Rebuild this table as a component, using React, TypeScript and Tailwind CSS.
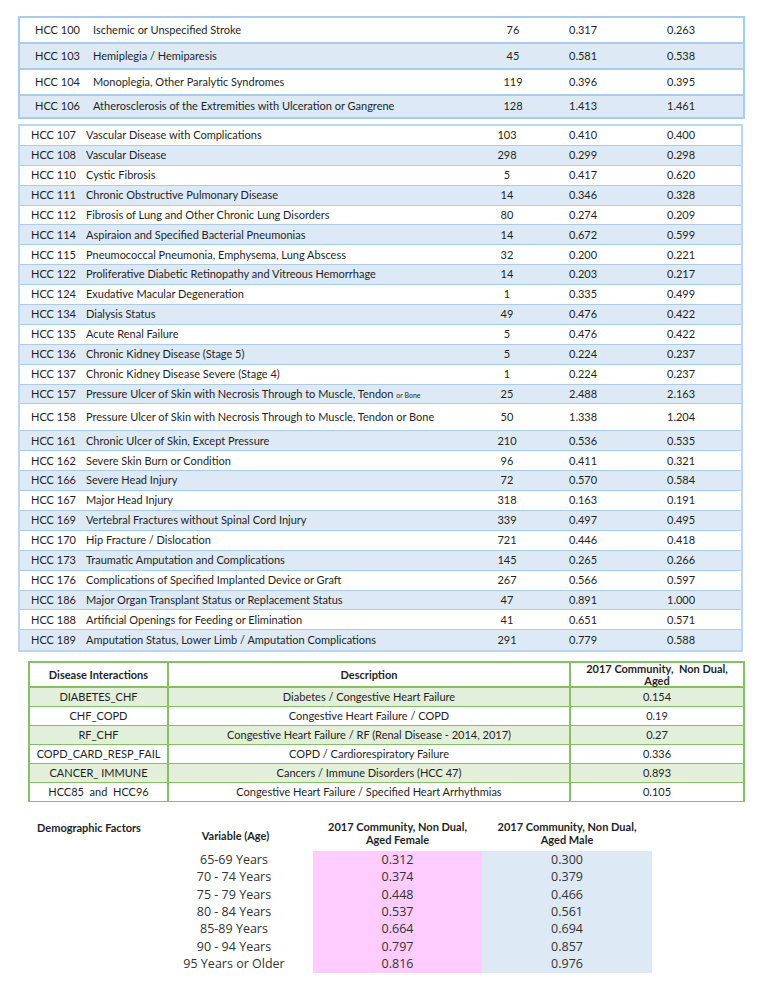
import React from 'react';

const font = { fontFamily: 'Lato, "Liberation Sans", sans-serif' };
const ageFont = { fontFamily: '"Open Sans", "Noto Sans", sans-serif' };

const topRows = [
  ['HCC 100', 'Ischemic or Unspecified Stroke', '76', '0.317', '0.263'],
  ['HCC 103', 'Hemiplegia  / Hemiparesis', '45', '0.581', '0.538'],
  ['HCC 104', 'Monoplegia, Other Paralytic Syndromes', '119', '0.396', '0.395'],
  ['HCC 106', 'Atherosclerosis of the Extremities with Ulceration or Gangrene', '128', '1.413', '1.461'],
];

const mainRows = [
  ['HCC 107', 'Vascular Disease with Complications', '103', '0.410', '0.400'],
  ['HCC 108', 'Vascular Disease', '298', '0.299', '0.298'],
  ['HCC 110', 'Cystic Fibrosis', '5', '0.417', '0.620'],
  ['HCC 111', 'Chronic Obstructive Pulmonary Disease', '14', '0.346', '0.328'],
  ['HCC 112', 'Fibrosis of Lung and Other Chronic Lung Disorders', '80', '0.274', '0.209'],
  ['HCC 114', 'Aspiraion and Specified Bacterial Pneumonias', '14', '0.672', '0.599'],
  ['HCC 115', 'Pneumococcal Pneumonia, Emphysema, Lung Abscess', '32', '0.200', '0.221'],
  ['HCC 122', 'Proliferative Diabetic Retinopathy and Vitreous Hemorrhage', '14', '0.203', '0.217'],
  ['HCC 124', 'Exudative Macular Degeneration', '1', '0.335', '0.499'],
  ['HCC 134', 'Dialysis Status', '49', '0.476', '0.422'],
  ['HCC 135', 'Acute Renal Failure', '5', '0.476', '0.422'],
  ['HCC 136', 'Chronic Kidney Disease (Stage 5)', '5', '0.224', '0.237'],
  ['HCC 137', 'Chronic Kidney Disease Severe (Stage 4)', '1', '0.224', '0.237'],
  ['HCC 157', 'SMALL', '25', '2.488', '2.163'],
  ['HCC 158', 'Pressure Ulcer of Skin with Necrosis Through to Muscle, Tendon or Bone', '50', '1.338', '1.204'],
  ['HCC 161', 'Chronic Ulcer of Skin, Except Pressure', '210', '0.536', '0.535'],
  ['HCC 162', 'Severe Skin Burn or Condition', '96', '0.411', '0.321'],
  ['HCC 166', 'Severe Head Injury', '72', '0.570', '0.584'],
  ['HCC 167', 'Major Head Injury', '318', '0.163', '0.191'],
  ['HCC 169', 'Vertebral Fractures without Spinal Cord Injury', '339', '0.497', '0.495'],
  ['HCC 170', 'Hip Fracture / Dislocation', '721', '0.446', '0.418'],
  ['HCC 173', 'Traumatic Amputation and Complications', '145', '0.265', '0.266'],
  ['HCC 176', 'Complications of Specified Implanted Device or Graft', '267', '0.566', '0.597'],
  ['HCC 186', 'Major Organ Transplant Status or Replacement Status', '47', '0.891', '1.000'],
  ['HCC 188', 'Artificial Openings for Feeding or Elimination', '41', '0.651', '0.571'],
  ['HCC 189', 'Amputation Status, Lower Limb / Amputation Complications', '291', '0.779', '0.588'],
];

const interactions = [
  ['DIABETES_CHF', 'Diabetes / Congestive Heart Failure', '0.154'],
  ['CHF_COPD', 'Congestive Heart Failure / COPD', '0.19'],
  ['RF_CHF', 'Congestive Heart Failure / RF (Renal Disease - 2014, 2017)', '0.27'],
  ['COPD_CARD_RESP_FAIL', 'COPD / Cardiorespiratory Failure', '0.336'],
  ['CANCER_ IMMUNE', 'Cancers / Immune Disorders (HCC 47)', '0.893'],
  ['HCC85  and  HCC96', 'Congestive Heart Failure / Specified Heart Arrhythmias', '0.105'],
];

const ages = [
  ['65-69 Years', '0.312', '0.300'],
  ['70 - 74 Years', '0.374', '0.379'],
  ['75 - 79 Years', '0.448', '0.466'],
  ['80 - 84 Years', '0.537', '0.561'],
  ['85-89 Years', '0.664', '0.694'],
  ['90 - 94 Years', '0.797', '0.857'],
  ['95 Years or Older', '0.816', '0.976'],
];

export default function App() {
  return (
    <div className="w-[768px] h-[1008px] bg-white text-[#1f1f1f] pt-4" style={font}>
      {/* HCC table, upper block */}
      <div className="ml-[18px] w-[727px] border-2 border-[#a9cbec] text-[11px]">
        {topRows.map((r, i) => (
          <div
            key={r[0]}
            className={`flex items-center ${i === 3 ? 'h-[21px]' : 'h-[26px] border-b-2 border-[#a9cbec]'} ${i % 2 ? 'bg-[#ddeaf6]' : 'bg-white'}`}
          >
            <div className="w-[73px] pl-[15px]">{r[0]}</div>
            <div className="w-[384px]">{r[1]}</div>
            <div className="w-[72px] text-center">{r[2]}</div>
            <div className="w-[118px] pl-[20px]">{r[3]}</div>
            <div>{r[4]}</div>
          </div>
        ))}
      </div>

      {/* HCC table, lower block */}
      <div className="mt-[5px] ml-[18px] w-[725px] border-2 border-[#bcd6ef] text-[11px]">
        {mainRows.map((r, i) => (
          <div
            key={r[0]}
            className={`flex items-center ${r[0] === 'HCC 158' ? 'h-[27px]' : 'h-[19.9px]'} ${i < mainRows.length - 1 ? 'border-b border-[#a9cbec]' : ''} ${i % 2 ? 'bg-[#ddeaf6]' : 'bg-white'}`}
          >
            <div className="w-[66px] pl-[11px]">{r[0]}</div>
            <div className="w-[385px] whitespace-nowrap">
              {r[1] === 'SMALL' ? (
                <>
                  Pressure Ulcer of Skin with Necrosis Through to Muscle, Tendon{' '}
                  <span className="text-[7px]">or Bone</span>
                </>
              ) : (
                r[1]
              )}
            </div>
            <div className="w-[72px] text-center">{r[2]}</div>
            <div className="w-[124px] pl-[26px]">{r[3]}</div>
            <div>{r[4]}</div>
          </div>
        ))}
      </div>

      {/* Disease interactions */}
      <table className="mt-[9px] ml-[28px] w-[717px] table-fixed border-collapse text-[11px] text-center">
        <colgroup>
          <col className="w-[139px]" />
          <col className="w-[402px]" />
          <col />
        </colgroup>
        <thead>
          <tr className="h-[25px] font-bold">
            <th className="border-2 border-[#86c065]">Disease Interactions</th>
            <th className="border-2 border-[#86c065]">Description</th>
            <th className="border-2 border-[#86c065] leading-[11.5px] px-1">
              2017 Community,&nbsp; Non Dual,
              <br />
              Aged
            </th>
          </tr>
        </thead>
        <tbody>
          {interactions.map((r, i) => (
            <tr key={r[0]} className={`h-[19px] ${i % 2 ? 'bg-white' : 'bg-[#e2efda]'}`}>
              <td className="border-x-2 border-b border-[#86c065] whitespace-pre">{r[0]}</td>
              <td className="border-x-2 border-b border-[#86c065]">{r[1]}</td>
              <td className="border-x-2 border-b border-[#86c065]">{r[2]}</td>
            </tr>
          ))}
        </tbody>
      </table>

      {/* Demographic factors */}
      <div className="mt-[17px] grid grid-cols-[155px_158px_169px_170px]">
        <div className="pl-[37px] text-[11px] font-bold leading-[13px] pt-[2px]">Demographic Factors</div>
        <div className="text-[11px] font-bold text-center pt-[9px] pl-[3px]">Variable (Age)</div>
        <div className="text-[11px] font-bold text-center leading-[13px] pt-[1px] pb-[5px]">
          2017 Community, Non Dual,
          <br />
          Aged Female
        </div>
        <div className="text-[11px] font-bold text-center leading-[13px] pt-[1px] pb-[5px]">
          2017 Community, Non Dual,
          <br />
          Aged Male
        </div>
        {ages.map((r) => (
          <React.Fragment key={r[0]}>
            <div />
            <div className="text-center text-[12.5px] leading-[17.4px] text-[#333]" style={ageFont}>
              {r[0]}
            </div>
            <div className="bg-[#ffccff] text-center text-[12.5px] leading-[17.4px] text-[#333]" style={ageFont}>
              {r[1]}
            </div>
            <div className="bg-[#ddeaf6] text-center text-[12.5px] leading-[17.4px] text-[#333]" style={ageFont}>
              {r[2]}
            </div>
          </React.Fragment>
        ))}
      </div>
    </div>
  );
}
